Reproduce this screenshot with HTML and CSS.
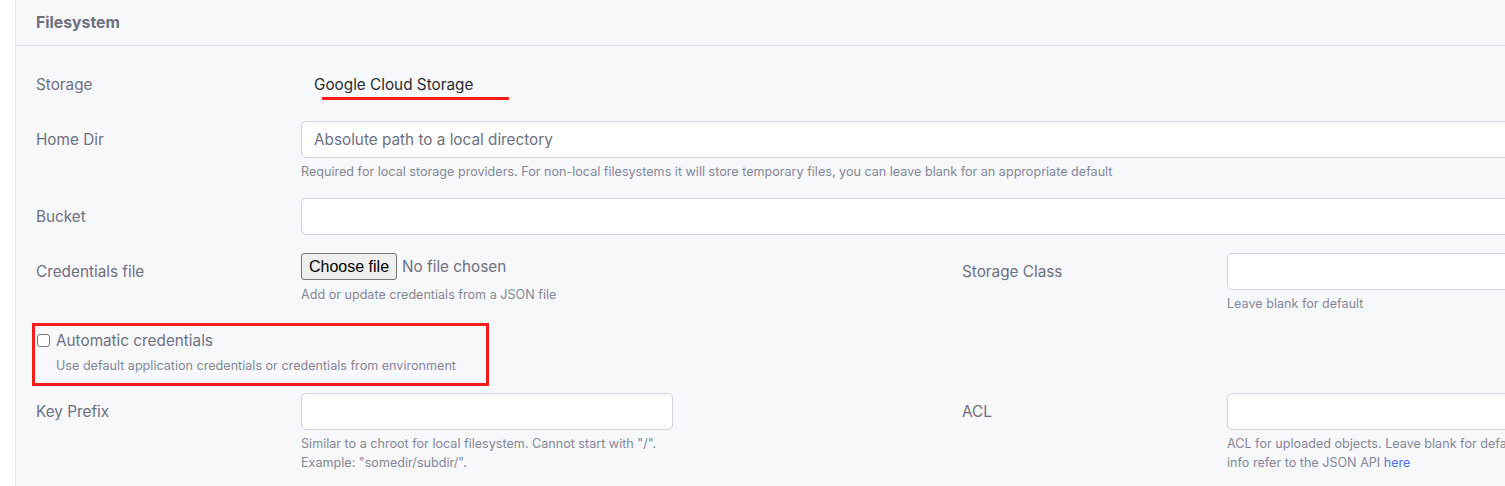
FILE: index.html
```html
<!DOCTYPE html>
<html lang="en">
<head>
<meta charset="utf-8">
<title>Filesystem</title>
<link rel="stylesheet" href="styles.css">
</head>
<body>
<div class="page">
  <div class="card">
    <div class="card-header">Filesystem</div>
    <div class="card-body">

      <div class="row row-storage">
        <div class="label label-storage">Storage</div>
        <div class="value-cell span-all">
          <div class="plain-value">Google Cloud Storage</div>
          <span class="mark-underline"></span>
        </div>
      </div>

      <div class="row">
        <div class="label">Home Dir</div>
        <div class="span-all">
          <div class="input placeholder">Absolute path to a local directory</div>
          <div class="help">Required for local storage providers. For non-local filesystems it will store temporary files, you can leave blank for an appropriate default</div>
        </div>
      </div>

      <div class="row">
        <div class="label">Bucket</div>
        <div class="span-all">
          <div class="input"></div>
        </div>
      </div>

      <div class="row">
        <div class="label">Credentials file</div>
        <div class="cell">
          <div class="file-line">
            <span class="file-btn">Choose file</span>
            <span class="file-none">No file chosen</span>
          </div>
          <div class="help help-file">Add or update credentials from a JSON file</div>
        </div>
        <div class="spacer"></div>
        <div class="label">Storage Class</div>
        <div class="cell">
          <div class="input"></div>
          <div class="help">Leave blank for default</div>
        </div>
      </div>

      <div class="check-row">
        <div class="check-line">
          <span class="checkbox"></span>
          <span class="check-label">Automatic credentials</span>
        </div>
        <div class="help check-help">Use default application credentials or credentials from environment</div>
        <span class="mark-box"></span>
      </div>

      <div class="row">
        <div class="label">Key Prefix</div>
        <div class="cell">
          <div class="input"></div>
          <div class="help">Similar to a chroot for local filesystem. Cannot start with "/". Example: "somedir/subdir/".</div>
        </div>
        <div class="spacer"></div>
        <div class="label">ACL</div>
        <div class="cell">
          <div class="input"></div>
          <div class="help">ACL for uploaded objects. Leave blank for default. For more info refer to the JSON API <a class="link" href="#">here</a></div>
        </div>
      </div>

    </div>
  </div>
</div>
</body>
</html>
```

FILE: styles.css
```css
html, body {
  margin: 0;
  padding: 0;
  background: #ffffff;
  overflow: hidden;
}

body {
  font-family: Inter, "Noto Sans", "Liberation Sans", sans-serif;
  color: #6e707e;
}

.page {
  padding-left: 15px;
  width: 1640px;
}

.card {
  border-left: 1px solid #e3e6f0;
  background: #f7f8fc;
}

.card-header {
  padding: 12px 20px;
  line-height: 21px;
  font-size: 15.8px;
  font-weight: 700;
  color: #6e707e;
  border-bottom: 1px solid #e3e6f0;
}

.card-body {
  padding: 21px 20px 20px 20px;
}

.row {
  display: grid;
  grid-template-columns: 240px 372px 239px 240px 372px;
  column-gap: 25px;
  margin-bottom: 17.5px;
}

.label {
  font-size: 15.3px;
  line-height: 37px;
  color: #6e707e;
  white-space: nowrap;
}

.label-storage {
  line-height: 36px;
}

.span-all {
  grid-column: 2 / -1;
}

.value-cell {
  position: relative;
}

.plain-value {
  height: 36px;
  line-height: 36px;
  padding-left: 13px;
  font-size: 15.3px;
  color: #2b2b2e;
}

.mark-underline {
  position: absolute;
  left: 21px;
  top: 30px;
  width: 187px;
  height: 3px;
  background: #f51c1c;
}

.input {
  box-sizing: border-box;
  height: 37px;
  border: 1px solid #d1d3e2;
  border-radius: 5px;
  background: #ffffff;
  padding: 0 12px;
  font-size: 15.3px;
  line-height: 35px;
}

.placeholder {
  color: #6e707e;
}

.help {
  margin-top: 4px;
  font-size: 12.6px;
  line-height: 19px;
  color: #858796;
}

.link {
  color: #4e73df;
  text-decoration: none;
}

.file-line {
  display: flex;
  align-items: center;
  height: 27px;
}

.file-btn {
  box-sizing: border-box;
  height: 27px;
  padding: 0 7px;
  border: 1px solid #767676;
  border-radius: 3px;
  background: #efefef;
  color: #000000;
  font-family: "Liberation Sans", Arial, sans-serif;
  font-size: 16px;
  line-height: 25px;
}

.file-none {
  margin-left: 5px;
  font-size: 15.3px;
  color: #6e707e;
}

.help-file {
  margin-top: 5px;
}

.check-row {
  position: relative;
  margin-bottom: 17.5px;
}

.check-line {
  display: flex;
  align-items: center;
  height: 21px;
}

.checkbox {
  box-sizing: border-box;
  width: 13px;
  height: 13px;
  margin-left: 1px;
  border: 1px solid #767676;
  border-radius: 3px;
  background: #ffffff;
}

.check-label {
  margin-left: 6px;
  font-size: 15.3px;
  color: #6e707e;
}

.check-help {
  margin-top: 5px;
  padding-left: 20px;
}

.mark-box {
  position: absolute;
  left: -4px;
  top: -7px;
  width: 457px;
  height: 63px;
  box-sizing: border-box;
  border: 3px solid #f51c1c;
}
```
